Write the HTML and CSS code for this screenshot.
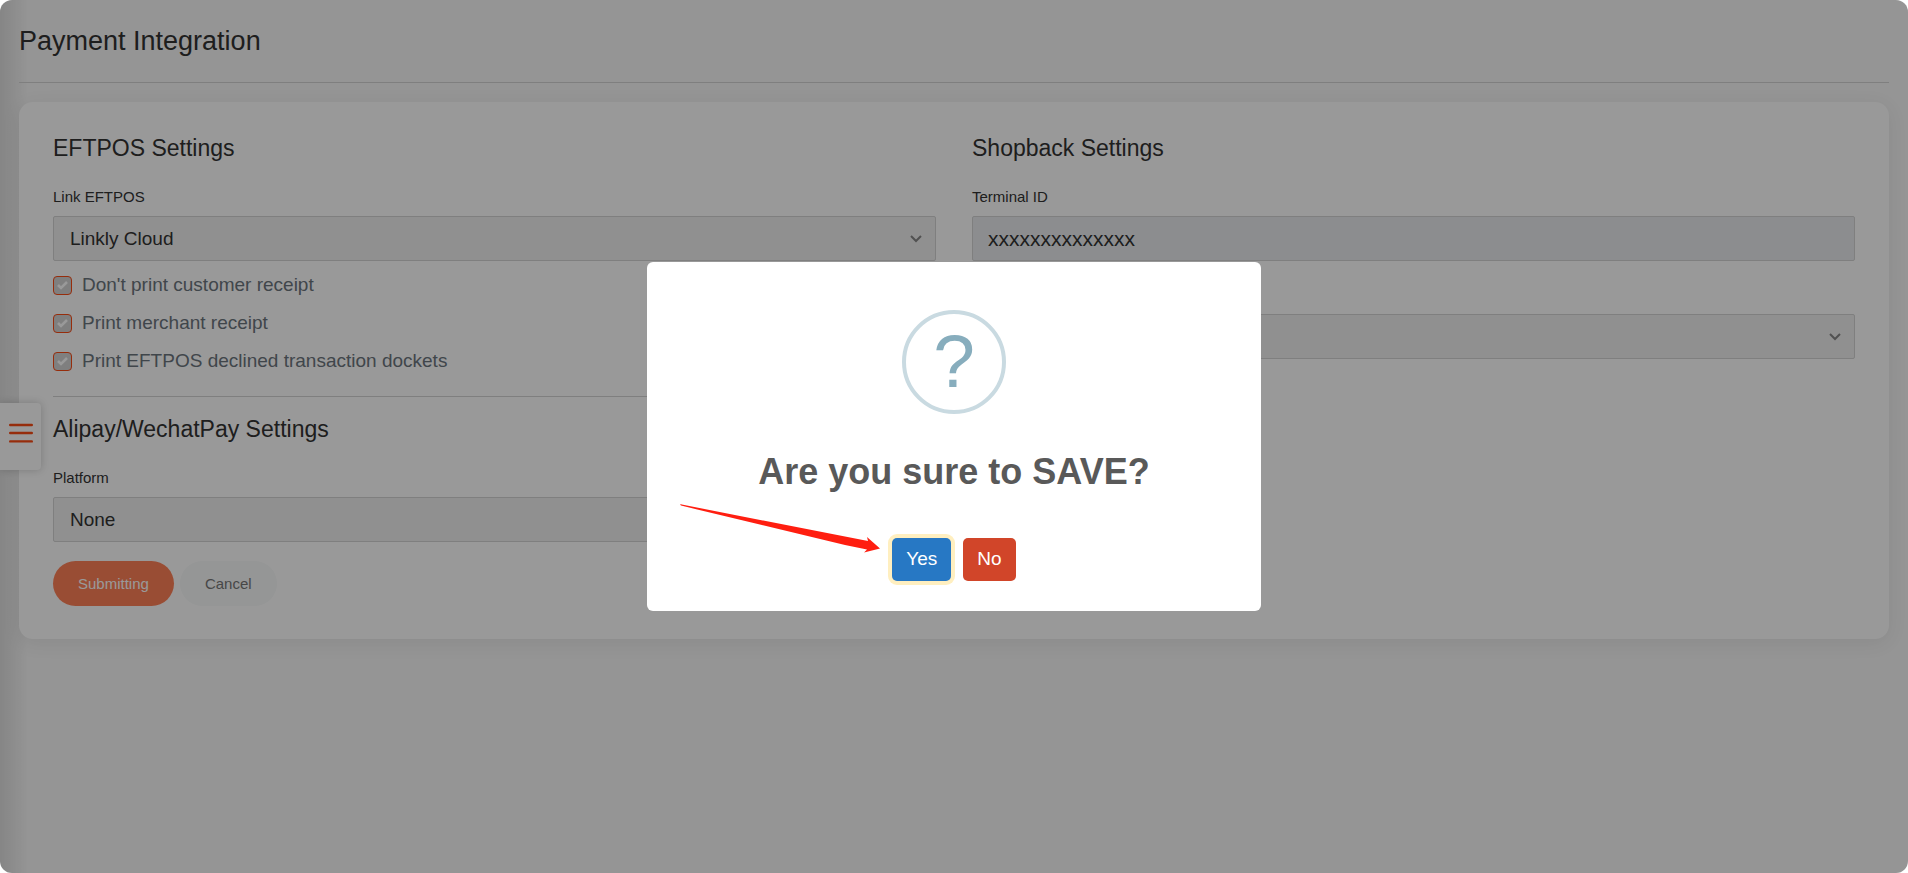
FILE: index.html
```html
<!DOCTYPE html>
<html lang="en">
  <head>
    <meta charset="utf-8" />
    <title>Payment Integration</title>
    <link rel="stylesheet" href="styles.css">
  </head>
  <body>
    <div class="page">
      <header class="page-header">
        <h1>Payment Integration</h1>
      </header>

      <form class="card" id="paymentForm">
        <div class="columns">
          <div class="column">
            <section class="settings">
              <h2>EFTPOS Settings</h2>
              <div class="form-group">
                <label for="linkEftpos">Link EFTPOS</label>
                <select id="linkEftpos" name="linkEftpos">
                  <option>Linkly Cloud</option>
                </select>
              </div>
              <div class="checks">
                <label class="check"><input type="checkbox" name="customerReceipt" checked /> Don't print customer receipt</label>
                <label class="check"><input type="checkbox" name="merchantReceipt" checked /> Print merchant receipt</label>
                <label class="check"><input type="checkbox" name="declinedDockets" checked /> Print EFTPOS declined transaction dockets</label>
              </div>
            </section>

            <section class="settings divided">
              <h2>Alipay/WechatPay Settings</h2>
              <div class="form-group">
                <label for="platform">Platform</label>
                <select id="platform" name="platform">
                  <option>None</option>
                </select>
              </div>
            </section>
          </div>

          <div class="column">
            <section class="settings">
              <h2>Shopback Settings</h2>
              <div class="form-group">
                <label for="terminalId">Terminal ID</label>
                <input type="text" id="terminalId" name="terminalId" value="xxxxxxxxxxxxxx" readonly />
              </div>
              <div class="form-group">
                <select id="shopbackMode" name="shopbackMode" aria-label="Shopback mode">
                  <option></option>
                </select>
              </div>
            </section>
          </div>
        </div>

        <div class="actions">
          <button type="submit" class="btn-submit">Submitting</button>
          <button type="button" class="btn-cancel">Cancel</button>
        </div>
      </form>

      <button type="button" class="menu-toggle" aria-label="Open menu">
        <svg width="24" height="20" viewBox="0 0 24 20" stroke="#fb4b14" stroke-width="2.4" stroke-linecap="round">
          <path d="M1.2 2h21.6M1.2 10h21.6M1.2 18.4h21.6" />
        </svg>
      </button>
    </div>

    <div class="overlay">
      <div class="modal" role="dialog" aria-modal="true" aria-labelledby="modalTitle">
        <div class="modal-icon">?</div>
        <h2 class="modal-title" id="modalTitle">Are you sure to SAVE?</h2>
        <div class="modal-actions">
          <button type="button" class="btn-yes">Yes</button>
          <button type="button" class="btn-no">No</button>
        </div>
        <svg class="arrow" width="200" height="50" viewBox="0 0 200 50" fill="#ff1e10">
          <path d="M0 0.5 Q1 0 3 0.8 L188 37 L187 33 L200 44.5 L184 48.5 L187 45.5 L165 41 L1 1.6 Z" />
        </svg>
      </div>
    </div>
  </body>
</html>
```
FILE: styles.css
```css
* {
  box-sizing: border-box;
}

html {
  background-color: #fff;
}

body {
  margin: 0;
  font-family: "Liberation Sans", Arial, sans-serif;
  color: #333;
}

h1,
h2 {
  margin: 0;
  font-weight: normal;
}

button,
input,
select {
  font-family: inherit;
}

.page {
  position: relative;
  min-height: 100vh;
  padding: 0 19px 40px;
  border-radius: 12px;
  background-color: #f8f8f8;
  background-image: linear-gradient(to right, rgba(0, 0, 0, 0.1), rgba(0, 0, 0, 0) 28px);
}

.page-header {
  padding: 24px 0;
  border-bottom: 1px solid #d4d4d4;
}

h1 {
  font-size: 27px;
  line-height: 34px;
}

.card {
  margin-top: 19px;
  padding: 32px 34px 33px;
  border-radius: 14px;
  background-color: #fff;
  box-shadow: 0 4px 20px rgba(0, 0, 0, 0.07);
}

.columns {
  display: grid;
  grid-template-columns: 1fr 1fr;
  gap: 36px;
}

h2 {
  font-size: 23px;
  line-height: 28px;
}

.settings h2 {
  margin-bottom: 25px;
}

.form-group {
  display: flex;
  flex-direction: column;
}

.form-group label {
  margin-bottom: 9px;
  font-size: 15px;
  line-height: 20px;
}

.form-group + .form-group {
  margin-top: 53px;
}

select,
input[type="text"] {
  width: 100%;
  height: 45px;
  padding: 0 16px;
  border: 1px solid #d4d4d4;
  border-radius: 2px;
  background-color: #f0f0f0;
  color: #333;
  font-size: 19px;
}

select {
  appearance: none;
  background-image: url("data:image/svg+xml,%3Csvg xmlns='http://www.w3.org/2000/svg' width='12' height='8' fill='none' stroke='%23888' stroke-width='2'%3E%3Cpath d='M1 1l5 5 5-5'/%3E%3C/svg%3E");
  background-repeat: no-repeat;
  background-position: right 13px center;
}

input[type="text"] {
  padding: 0 15px;
  background-color: #e9ecef;
  font-size: 21px;
}

.checks {
  display: flex;
  flex-direction: column;
  gap: 14px;
  padding: 12px 0 23px;
}

.check {
  display: flex;
  align-items: center;
  gap: 10px;
  color: #6c757d;
  font-size: 19px;
  line-height: 24px;
}

.check input {
  appearance: none;
  width: 19px;
  height: 19px;
  margin: 0;
  border: 1px solid #fb4b14;
  border-radius: 4px;
  background: #d4d4d4 url("data:image/svg+xml,%3Csvg xmlns='http://www.w3.org/2000/svg' width='11' height='9' fill='none' stroke='white' stroke-width='2.6'%3E%3Cpath d='M1 4l3 3 6-6'/%3E%3C/svg%3E") no-repeat center;
}

.divided {
  padding-top: 18px;
  border-top: 1px solid #d4d4d4;
}

.actions {
  display: flex;
  gap: 6px;
  margin-top: 19px;
}

.actions button {
  height: 45px;
  padding: 0 25px;
  border: none;
  border-radius: 23px;
  font-size: 15px;
}

.btn-submit {
  background-color: #ff8158;
  color: #fff;
}

.btn-cancel {
  background-color: #f8fafa;
  color: #777;
}

.menu-toggle {
  position: absolute;
  top: 403px;
  left: 0;
  display: flex;
  align-items: center;
  justify-content: center;
  width: 41px;
  height: 67px;
  padding: 0 0 8px;
  border: none;
  border-radius: 0 4px 4px 0;
  background-color: #fff;
  box-shadow: 0 0 8px rgba(0, 0, 0, 0.2);
}

.overlay {
  position: fixed;
  inset: 0;
  display: flex;
  align-items: center;
  justify-content: center;
  border-radius: 12px;
  background-color: rgba(0, 0, 0, 0.4);
}

.modal {
  position: relative;
  display: flex;
  flex-direction: column;
  align-items: center;
  width: 614px;
  max-width: 100%;
  padding: 48px 24px 30px;
  border-radius: 6px;
  background-color: #fff;
}

.modal-icon {
  width: 104px;
  height: 104px;
  border: 4px solid #c9dae1;
  border-radius: 50%;
  color: #87adbd;
  font-size: 75px;
  line-height: 94px;
  text-align: center;
}

.modal-title {
  margin: 35px 0 43px;
  color: #595959;
  font-size: 36px;
  font-weight: bold;
  line-height: 46px;
}

.modal-actions {
  display: flex;
  gap: 12px;
}

.modal-actions button {
  height: 43px;
  padding: 0 14px 2px;
  border: none;
  border-radius: 5px;
  color: #fff;
  font-size: 19px;
}

.modal-actions .btn-yes {
  background-color: #2778c4;
  box-shadow: 0 0 0 4px #ffefc0;
}

.modal-actions .btn-no {
  background-color: #d14529;
}

/* pointer towards the Yes button */
.arrow {
  position: absolute;
  top: 242px;
  left: 33px;
}
```
